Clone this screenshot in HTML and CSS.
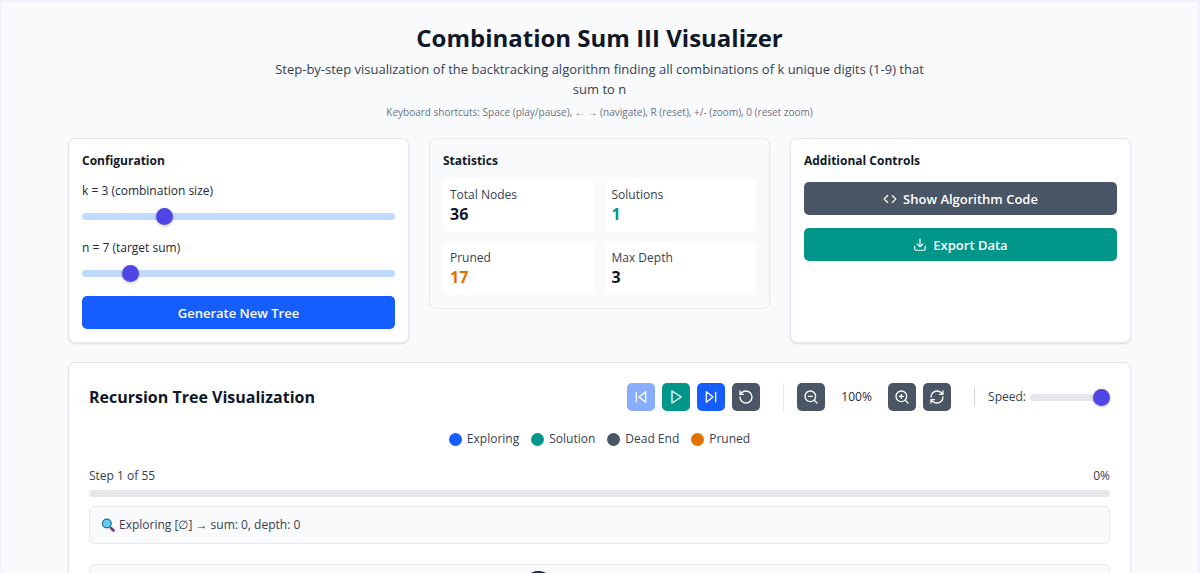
FILE: index.html
```html
<!DOCTYPE html>
<html lang="en">
<head>
  <meta charset="UTF-8">
  <meta name="viewport" content="width=device-width, initial-scale=1">
  <title>Combination Sum III Visualizer</title>
  <link rel="stylesheet" href="styles.css">
</head>
<body>
  <div class="container">
    <header class="header">
      <h1>Combination Sum III Visualizer</h1>
      <p class="subtitle">Step-by-step visualization of the backtracking algorithm finding all combinations of k unique digits (1-9) that sum to n</p>
      <p class="shortcuts">Keyboard shortcuts: Space (play/pause), ← → (navigate), R (reset), +/- (zoom), 0 (reset zoom)</p>
    </header>

    <div class="panels">
      <section class="card config">
        <h3>Configuration</h3>
        <div class="fields">
          <div class="field">
            <label for="k">k = 3 (combination size)</label>
            <input type="range" id="k" min="2" max="6" value="3">
          </div>
          <div class="field">
            <label for="n">n = 7 (target sum)</label>
            <input type="range" id="n" min="1" max="45" value="7">
          </div>
          <button class="btn btn-blue">Generate New Tree</button>
        </div>
      </section>

      <section class="card stats">
        <h3>Statistics</h3>
        <div class="stat-grid">
          <div class="stat"><span>Total Nodes</span><strong>36</strong></div>
          <div class="stat"><span>Solutions</span><strong class="teal">1</strong></div>
          <div class="stat"><span>Pruned</span><strong class="orange">17</strong></div>
          <div class="stat"><span>Max Depth</span><strong>3</strong></div>
        </div>
      </section>

      <section class="card">
        <h3>Additional Controls</h3>
        <div class="actions">
          <button class="btn btn-slate">
            <svg class="icon-sm" viewBox="0 0 24 24"><path d="M16 18l6-6-6-6M8 6l-6 6 6 6"/></svg>
            Show Algorithm Code
          </button>
          <button class="btn btn-teal">
            <svg class="icon-sm" viewBox="0 0 24 24"><path d="M21 14v5a2 2 0 0 1-2 2H5a2 2 0 0 1-2-2v-5M7 10l5 5 5-5M12 15V2"/></svg>
            Export Data
          </button>
        </div>
      </section>
    </div>

    <section class="card tree">
      <div class="tree-head">
        <h2>Recursion Tree Visualization</h2>
        <div class="toolbar">
          <div class="group">
            <button class="tool btn-blue" aria-label="Previous step" disabled>
              <svg viewBox="0 0 24 24"><path d="M19 20L9 12l10-8zM5 19V5"/></svg>
            </button>
            <button class="tool btn-teal" aria-label="Play">
              <svg viewBox="0 0 24 24"><path d="M6 3l14 9-14 9z"/></svg>
            </button>
            <button class="tool btn-blue" aria-label="Next step">
              <svg viewBox="0 0 24 24"><path d="M5 4l10 8-10 8zM19 5v14"/></svg>
            </button>
            <button class="tool btn-slate" aria-label="Reset">
              <svg viewBox="0 0 24 24"><path d="M3 12a9 9 0 1 0 9-9 9.75 9.75 0 0 0-6.74 2.74L3 8M3 3v5h5"/></svg>
            </button>
          </div>
          <div class="group zoom">
            <button class="tool btn-slate" aria-label="Zoom out">
              <svg viewBox="0 0 24 24"><circle cx="11" cy="11" r="8"/><path d="M21 21l-4.35-4.35M8 11h6"/></svg>
            </button>
            <span class="zoom-level">100%</span>
            <button class="tool btn-slate" aria-label="Zoom in">
              <svg viewBox="0 0 24 24"><circle cx="11" cy="11" r="8"/><path d="M21 21l-4.35-4.35M11 8v6M8 11h6"/></svg>
            </button>
            <button class="tool btn-slate" aria-label="Reset zoom">
              <svg viewBox="0 0 24 24"><path d="M3 12a9 9 0 0 1 9-9 9.75 9.75 0 0 1 6.74 2.74L21 8M21 3v5h-5M21 12a9 9 0 0 1-9 9 9.75 9.75 0 0 1-6.74-2.74L3 16M8 16H3v5"/></svg>
            </button>
          </div>
          <div class="group speed">
            <label for="speed">Speed:</label>
            <input type="range" id="speed" min="100" max="2000" value="2000">
          </div>
        </div>
      </div>

      <ul class="legend">
        <li><i class="dot exploring"></i>Exploring</li>
        <li><i class="dot solution"></i>Solution</li>
        <li><i class="dot dead"></i>Dead End</li>
        <li><i class="dot pruned"></i>Pruned</li>
      </ul>

      <div class="progress-text"><span>Step 1 of 55</span><span>0%</span></div>
      <div class="progress"></div>

      <div class="message">
        <svg class="magnifier" viewBox="0 0 24 24">
          <path d="M15 15l2.500 2.500" stroke="#4a5565" stroke-width="2"/>
          <path d="M17.500 17.500l4 4" stroke="#74327f" stroke-width="4.500" stroke-linecap="round"/>
          <circle cx="10" cy="9.500" r="7.500" fill="#5fd0f5" stroke="#35618e" stroke-width="2"/>
        </svg>
        <span>Exploring [∅] → sum: 0, depth: 0</span>
      </div>

      <div class="canvas">
        <svg class="nodes">
          <circle cx="44%" cy="22" r="15"/>
        </svg>
      </div>
    </section>
  </div>
</body>
</html>
```
FILE: styles.css
```css
* { box-sizing: border-box; }
html { background: #f9fafc; }
body {
  margin: 0;
  padding: 21px 67px 0;
  border: solid #eef0ff;
  border-width: 2px 2px 0 1px;
  font-family: "Segoe UI", "Open Sans", sans-serif;
  font-size: 12px;
  line-height: 18px;
  color: #364153;
  background: #f9fafc;
}
h1, h2, h3, p, ul { margin: 0; padding: 0; }
h1, h2, h3 { color: #101828; }

.header { text-align: center; margin-bottom: 18px; }
h1 { font-size: 24px; line-height: 30px; font-weight: 700; }
.subtitle { max-width: 660px; margin: 6px auto 5px; font-size: 13px; line-height: 20px; }
.shortcuts { font-size: 10px; line-height: 16px; color: #6a7282; }

.card { background: #fff; border: 1px solid #e5e7eb; border-radius: 7px; padding: 13px; box-shadow: 0 1px 2px rgba(0, 0, 0, .12); }
.card h3 { font-size: 12px; line-height: 18px; margin-bottom: 12px; }
.panels { display: grid; grid-template-columns: repeat(3, 1fr); gap: 20px; margin-bottom: 19px; }

.fields { display: grid; gap: 19px; }
.field { display: grid; gap: 13px; }
.field label { font-weight: 500; color: #1e2939; }

input[type=range] { appearance: none; -webkit-appearance: none; display: block; width: 100%; height: 7px; margin: 0; border-radius: 4px; background: #bedbff; }
input[type=range]::-webkit-slider-thumb { -webkit-appearance: none; width: 17px; height: 17px; border-radius: 50%; background: #4f46e5; box-shadow: 0 1px 3px rgba(0, 0, 0, .25); }

button { border: 0; padding: 0; color: #fff; font-family: inherit; cursor: pointer; }
button svg { fill: none; stroke: currentColor; stroke-width: 2; stroke-linecap: round; stroke-linejoin: round; }
.btn { display: flex; align-items: center; justify-content: center; gap: 6px; width: 100%; height: 33px; border-radius: 5px; font-size: 13px; font-weight: 600; }
.btn-blue { background: #155dfc; }
.btn-teal { background: #009689; }
.btn-slate { background: #4a5565; }
.icon-sm { width: 14px; height: 14px; }
.actions { display: grid; gap: 13px; }

.stats { align-self: start; background: #f9fafb; box-shadow: none; }
.stats h3 { margin-bottom: 9px; }
.stat-grid { display: grid; grid-template-columns: 1fr 1fr; gap: 10px; }
.stat { display: flex; flex-direction: column; padding: 7px; border-radius: 5px; background: #fff; line-height: 17px; }
.stat strong { font-size: 16px; line-height: 22px; color: #101828; }
.stat .teal { color: #009689; }
.stat .orange { color: #e17100; }

.tree { padding: 20px; }
.tree-head { display: flex; justify-content: space-between; align-items: center; }
h2 { font-size: 16px; line-height: 22px; }
.toolbar { display: flex; align-items: center; gap: 23px; }
.group { display: flex; align-items: center; gap: 7px; }
.tool { display: flex; align-items: center; justify-content: center; width: 28px; height: 28px; border-radius: 5px; }
.tool:disabled { opacity: .5; cursor: default; }
.tool svg { width: 16px; height: 16px; }
.zoom { border-left: 1px solid #e5e7eb; padding-left: 13px; }
.zoom-level { width: 49px; text-align: center; font-weight: 500; color: #1e2939; }
.speed { gap: 4px; border-left: 1px solid #d1d5dc; padding-left: 13px; }
.speed input { width: 80px; background: #e5e7eb; }

.legend { display: flex; justify-content: center; gap: 12px; margin: 19px 0 19px; list-style: none; }
.legend li { display: flex; align-items: center; gap: 5px; }
.dot { width: 13px; height: 13px; border-radius: 50%; }
.exploring { background: #155dfc; }
.solution { background: #009689; }
.dead { background: #4a5565; }
.pruned { background: #e17100; }

.progress-text { display: flex; justify-content: space-between; margin-bottom: 5px; }
.progress { height: 7px; border-radius: 4px; background: #e5e7eb; }
.message { display: flex; align-items: center; gap: 4px; margin: 9px 0 20px; padding: 9px 11px; border: 1px solid #e5e7eb; border-radius: 5px; background: #f9fafb; }
.magnifier { width: 14px; height: 14px; fill: none; }
.canvas { border: 1px solid #e5e7eb; border-radius: 5px; background: #f9fafb; }
.nodes { display: block; width: 100%; height: 300px; }
.nodes circle { fill: #4a5565; stroke: #1e2939; stroke-width: 2; }
```
